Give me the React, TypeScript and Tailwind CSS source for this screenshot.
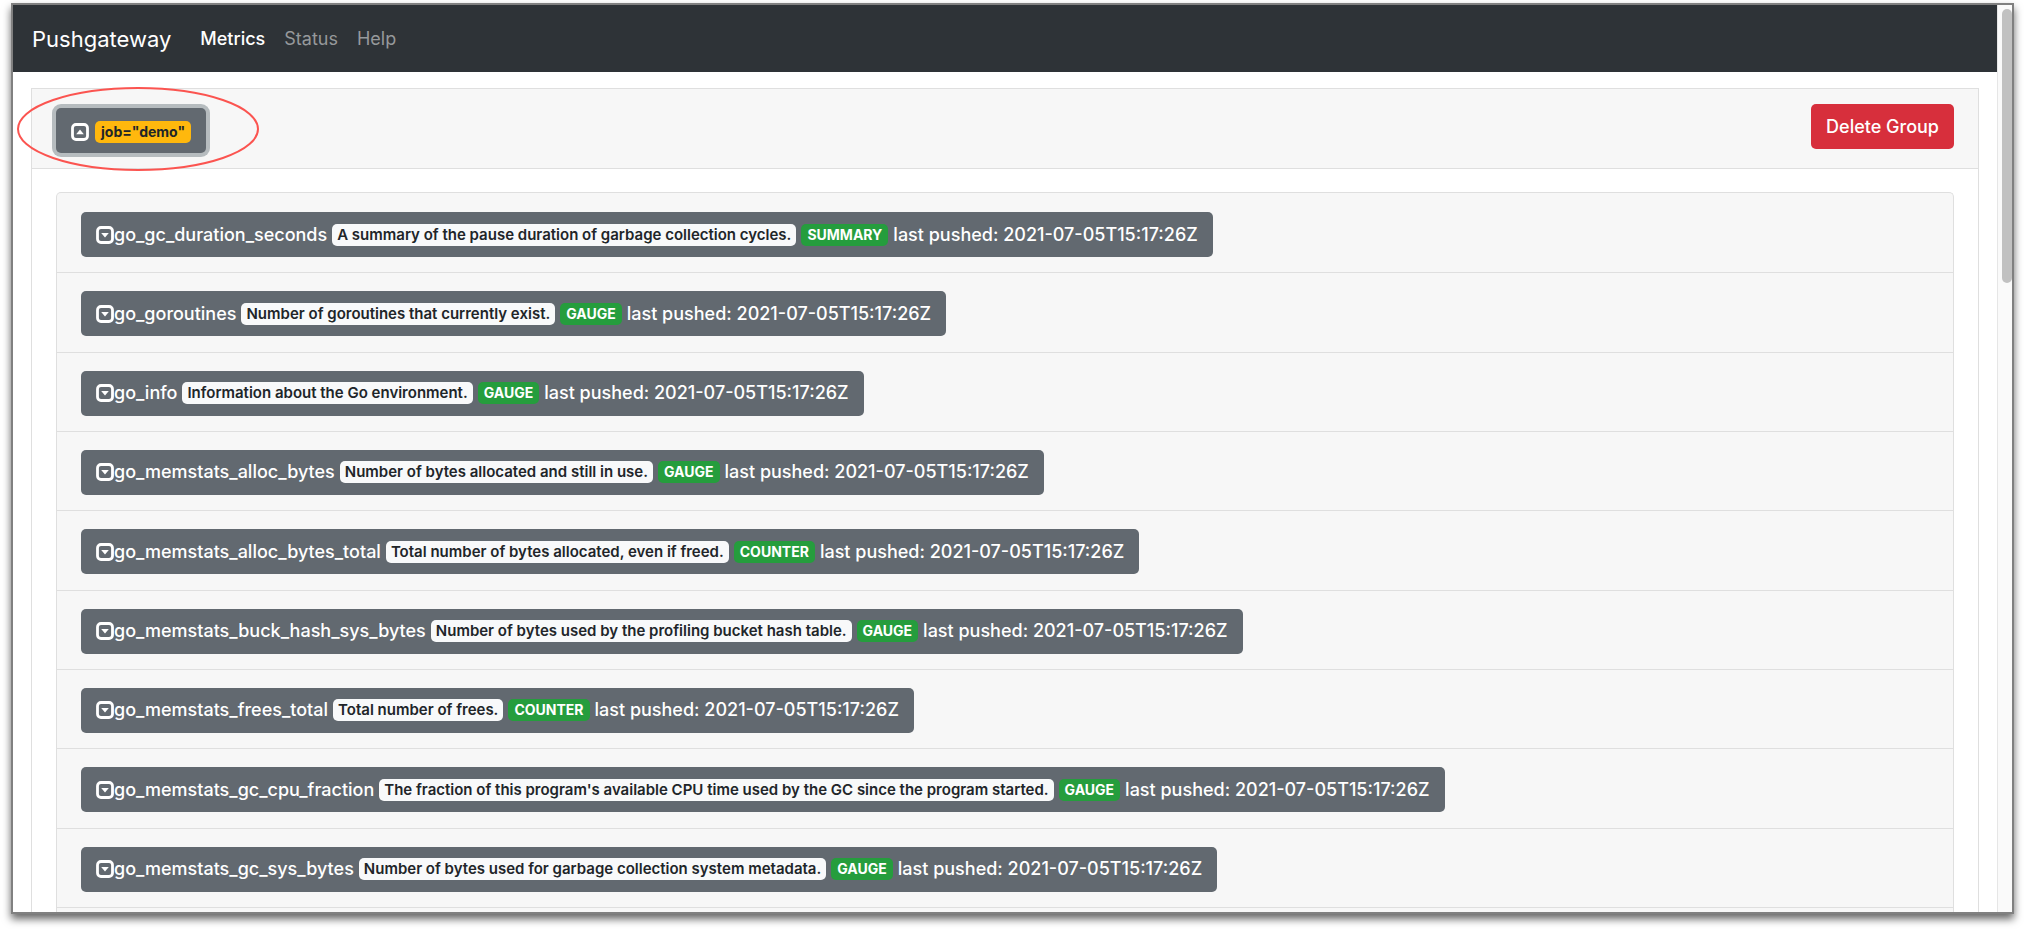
import clsx from 'clsx';

type Metric = {
  name: string;
  help: string;
  type: 'SUMMARY' | 'GAUGE' | 'COUNTER';
};

const PUSHED_AT = '2021-07-05T15:17:26Z';

const metrics: Metric[] = [
  { name: 'go_gc_duration_seconds', help: 'A summary of the pause duration of garbage collection cycles.', type: 'SUMMARY' },
  { name: 'go_goroutines', help: 'Number of goroutines that currently exist.', type: 'GAUGE' },
  { name: 'go_info', help: 'Information about the Go environment.', type: 'GAUGE' },
  { name: 'go_memstats_alloc_bytes', help: 'Number of bytes allocated and still in use.', type: 'GAUGE' },
  { name: 'go_memstats_alloc_bytes_total', help: 'Total number of bytes allocated, even if freed.', type: 'COUNTER' },
  { name: 'go_memstats_buck_hash_sys_bytes', help: 'Number of bytes used by the profiling bucket hash table.', type: 'GAUGE' },
  { name: 'go_memstats_frees_total', help: 'Total number of frees.', type: 'COUNTER' },
  { name: 'go_memstats_gc_cpu_fraction', help: "The fraction of this program's available CPU time used by the GC since the program started.", type: 'GAUGE' },
  { name: 'go_memstats_gc_sys_bytes', help: 'Number of bytes used for garbage collection system metadata.', type: 'GAUGE' }
];

const navLinks = ['Metrics', 'Status', 'Help'];

function ToggleIcon({ open }: { open?: boolean }) {
  return (
    <svg viewBox="0 0 18 18" className="h-[18px] w-[18px] shrink-0" aria-hidden="true">
      <rect x="1.5" y="1.5" width="15" height="15" rx="3.5" fill="none" stroke="currentColor" strokeWidth="2.8" />
      <path d={open ? 'M5.2 11.2 9 6.6l3.8 4.6z' : 'M5.2 6.9h7.6L9 11.5z'} fill="currentColor" />
    </svg>
  );
}

function MetricRow({ metric }: { metric: Metric }) {
  return (
    <li className="flex-1 border-t border-[#dfdfdf] pt-[18px] pl-6 first:border-transparent">
      <button
        type="button"
        className="flex h-[45px] items-center rounded-[5px] bg-[#626970] px-[15px] font-medium whitespace-nowrap text-white"
      >
        <ToggleIcon />
        {metric.name}
        <span className="mx-[5px] rounded-[5px] bg-[#f8f9fa] px-[5px] text-[15px] leading-[22px] font-semibold text-[#212529]">
          {metric.help}
        </span>
        <span className="mr-[5px] rounded-[5px] bg-[#259d3d] px-[6px] text-sm leading-[22px] font-bold">{metric.type}</span>
        last pushed: {PUSHED_AT}
      </button>
    </li>
  );
}

export default function App() {
  return (
    <div className="h-screen overflow-hidden bg-white pt-[3px] pr-[10px] pb-[15px] pl-[11px] font-['Inter',sans-serif] text-[18px] leading-7">
      <div className="flex h-full border-2 border-[#808080] bg-white shadow-[0_5px_8px_rgba(0,0,0,0.6)]">
        <div className="flex min-w-0 flex-1 flex-col overflow-hidden">
          <nav className="flex h-[67px] shrink-0 items-center bg-[#2e3337] px-[19px]">
            <a href="#" className="mr-[29px] text-[22px] text-white">Pushgateway</a>
            <div className="flex gap-[19px]">
              {navLinks.map((label, i) => (
                <a key={label} href="#" className={clsx(i === 0 ? 'font-medium text-white' : 'text-[#96999b]')}>
                  {label}
                </a>
              ))}
            </div>
          </nav>

          <section className="mx-[18px] mt-4 flex min-h-0 flex-1 flex-col border border-b-0 border-[#dfdfdf]">
            <header className="flex h-20 shrink-0 items-start justify-between border-b border-[#dfdfdf] bg-[#f7f7f7] px-6 pt-[15px]">
              <div className="relative mt-1">
                <button
                  type="button"
                  className="flex h-[45px] items-center gap-[6px] rounded-[5px] bg-[#626970] px-[15px] pt-0.5 text-white ring-4 ring-[#b6bcbf]"
                >
                  <ToggleIcon open />
                  <span className="rounded-[5px] bg-[#ffb80d] px-[6px] text-sm leading-[22px] font-bold text-[#212529]">job="demo"</span>
                </button>
                <svg
                  viewBox="0 0 244 86"
                  className="pointer-events-none absolute -top-[22px] -left-[40px] h-[86px] w-[244px]"
                  aria-hidden="true"
                >
                  <ellipse cx="122" cy="43" rx="120" ry="41" fill="none" stroke="#fb5450" strokeWidth="2" />
                </svg>
              </div>
              <button type="button" className="h-[45px] rounded-[5px] bg-[#d72f3c] px-[15px] font-medium text-white">
                Delete Group
              </button>
            </header>

            <ul className="mx-6 mt-[23px] flex min-h-0 flex-1 flex-col rounded-t-[5px] border border-b-0 border-[#dfdfdf] bg-[#f7f7f7]">
              {metrics.map((metric) => (
                <MetricRow key={metric.name} metric={metric} />
              ))}
              {/* top edge of the next row, cut off by the viewport */}
              <li className="h-[5px] shrink-0 border-t border-[#dfdfdf]" />
            </ul>
          </section>
        </div>

        <div className="w-[15px] shrink-0 border-l border-[#e6e6e6] bg-[#fafafa] pt-1 pl-1">
          <div className="h-[274px] rounded-[5px] bg-[#c1c1c1]" />
        </div>
      </div>
    </div>
  );
}
